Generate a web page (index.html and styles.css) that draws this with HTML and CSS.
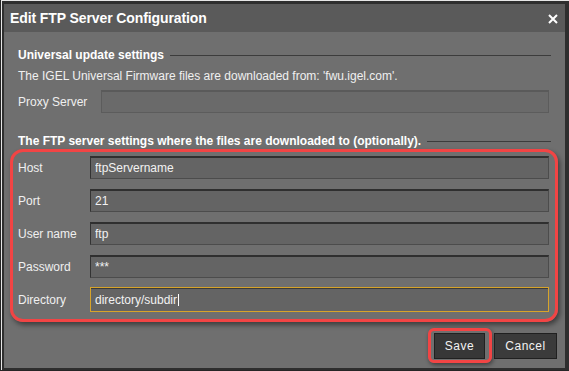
FILE: index.html
```html
<!DOCTYPE html>
<html lang="en">

<head>
  <meta charset="utf-8">
  <title>Edit FTP Server Configuration</title>
  <link rel="stylesheet" href="styles.css">
</head>

<body>
  <div class="frame">
    <div class="dialog">
      <div class="title-bar">
        <span class="title">Edit FTP Server Configuration</span>
        <svg class="close" width="10" height="10" viewBox="0 0 10 10">
          <path d="M1 1 L9 9 M9 1 L1 9" stroke="#ffffff" stroke-width="2" fill="none"/>
        </svg>
      </div>

      <div class="content">
        <div class="legend"><span>Universal update settings</span><div class="rule"></div></div>
        <p class="info">The IGEL Universal Firmware files are downloaded from: 'fwu.igel.com'.</p>

        <div class="row proxy-row">
          <label>Proxy Server</label>
          <input type="text" class="field disabled" disabled>
        </div>

        <div class="legend legend-ftp"><span>The FTP server settings where the files are downloaded to (optionally).</span><div class="rule"></div></div>

        <div class="highlight">
          <div class="row">
            <label>Host</label>
            <input type="text" class="field" value="ftpServername">
          </div>
          <div class="row">
            <label>Port</label>
            <input type="text" class="field" value="21">
          </div>
          <div class="row">
            <label>User name</label>
            <input type="text" class="field" value="ftp">
          </div>
          <div class="row">
            <label>Password</label>
            <input type="text" class="field" value="***">
          </div>
          <div class="row">
            <label>Directory</label>
            <div class="field focused"><span>directory/subdir</span><span class="caret"></span></div>
          </div>
        </div>

        <div class="buttons">
          <span class="btn-mark"><button class="btn save">Save</button></span>
          <button class="btn cancel">Cancel</button>
        </div>
      </div>
    </div>
  </div>
</body>

</html>
```

FILE: styles.css
```css
html,
body {
  margin: 0;
  padding: 0;
  background-color: #262626;
  font-family: "Liberation Sans", Arial, sans-serif;
  font-size: 12px;
}

.frame {
  width: 568px;
  height: 370px;
  margin-left: 1px;
  border-top: 1px solid #e6e6e6;
  border-left: 1px solid #e6e6e6;
  box-sizing: border-box;
  background-color: #2e2e2e;
  padding: 3px 4px 2px 2px;
}

.dialog {
  height: 100%;
  background-color: #6f6f6f;
  display: flex;
  flex-direction: column;
}

.title-bar {
  height: 28px;
  background-color: #5a5a5a;
  display: flex;
  align-items: center;
  justify-content: space-between;
  padding: 0 7px 0 6px;
  flex-shrink: 0;
}

.title {
  color: #ffffff;
  font-weight: bold;
  font-size: 14px;
  letter-spacing: -0.1px;
}

.close {
  margin-top: 1px;
}

.content {
  padding: 15px 14px 0 14px;
  color: #f0f0f0;
}

.legend {
  display: flex;
  align-items: center;
  height: 16px;
  font-weight: bold;
  color: #ffffff;
}

.legend .rule {
  flex: 1;
  height: 1px;
  background-color: #3c3c3c;
  margin-left: 6px;
}

.legend-ftp {
  margin-top: 20px;
}

.info {
  margin: 5px 0 0 0;
  line-height: 16px;
}

.row {
  display: flex;
  align-items: center;
  height: 23px;
}

.row label {
  width: 72px;
  flex-shrink: 0;
}

.proxy-row {
  margin-top: 6px;
  padding-right: 2px;
}

.proxy-row label {
  width: 83px;
}

.field {
  flex: 1;
  height: 23px;
  box-sizing: border-box;
  margin: 0;
  padding: 0 4px;
  background-color: #646464;
  border: 1px solid #4c4c4c;
  border-top: 2px solid #2f2f2f;
  border-left: 1px solid #333333;
  color: #f2f2f2;
  font-family: "Liberation Sans", Arial, sans-serif;
  font-size: 12px;
  outline: none;
}

.field.disabled {
  background-color: #6a6a6a;
  border: 1px solid #5c5c5c;
  border-top: 2px solid #5a5a5a;
}

.field.focused {
  display: flex;
  align-items: center;
  height: 25px;
  margin-top: -1px;
  margin-bottom: -1px;
  border: 1px solid #d7a42a;
  box-shadow: inset 0 1px 0 #3a3a3a;
}

.caret {
  width: 1px;
  height: 12px;
  background-color: #ffffff;
  margin-left: 1px;
}

.highlight {
  margin: 0 -7px 0 -8px;
  padding: 4px 6px 8px 5px;
  border: 3px solid #f24444;
  border-radius: 13px;
  box-shadow: 2px 3px 5px rgba(0, 0, 0, 0.45);
  display: flex;
  flex-direction: column;
  gap: 10px;
}

.buttons {
  display: flex;
  justify-content: flex-end;
  align-items: center;
  gap: 2px;
  margin: 6px -6px 0 0;
}

.btn-mark {
  display: inline-flex;
  padding: 2px 4px 1px 3px;
  border: 3px solid #f24444;
  border-radius: 6px;
  box-shadow: 1px 2px 4px rgba(0, 0, 0, 0.45);
}

.btn {
  height: 26px;
  padding: 0;
  background-color: #373737;
  border: 1px solid #202020;
  color: #f2f2f2;
  font-family: "Liberation Sans", Arial, sans-serif;
  font-size: 12px;
  letter-spacing: 0.5px;
}

.save {
  width: 51px;
}

.cancel {
  width: 63px;
  background-color: #3b3b3b;
}
```
